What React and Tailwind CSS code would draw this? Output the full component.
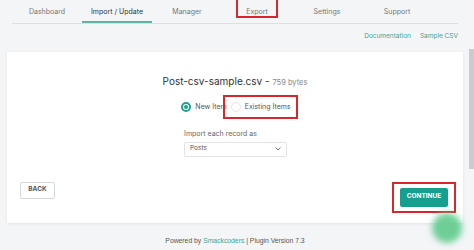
import React from "react";

const tabs = ["Dashboard", "Import / Update", "Manager", "Export", "Settings", "Support"];

export default function App() {
  return (
    <div className="relative w-[474px] h-[250px] overflow-hidden bg-[#f3f5f7] text-[#555]" style={{ fontFamily: "Inter, 'Noto Sans', sans-serif" }}>
      {/* tabs */}
      <div className="mx-[12px] w-[446px] h-[24px] flex border-b border-[#dcdfe2]">
        {tabs.map((t, i) => (
          <div
            key={t}
            className={`relative w-[70px] h-full flex items-start justify-center pt-[7px] text-[7px] ${
              i === 1 ? "text-[#333] border-b-2 border-[#5bb5a2] -mb-px" : "text-[#777]"
            }`}
          >
            {t}
            {t === "Export" && (
              <div className="absolute left-[14px] -top-[2px] w-[42px] h-[20px] border-2 border-[#d8262c]" />
            )}
          </div>
        ))}
      </div>

      <div className="flex justify-end gap-[9px] pr-[16px] pt-[8px] text-[6.5px] text-[#3ea592]">
        <span>Documentation</span>
        <span>Sample CSV</span>
      </div>

      <div className="flex items-start">
        {/* card */}
        <div className="ml-[7px] mt-[10px] w-[456px] h-[171px] bg-white shadow-[0_1px_3px_rgba(0,0,0,0.08)] flex flex-col">
          <div className="mt-[22px] text-center text-[10px] text-[#333]">
            Post-csv-sample.csv - <span className="text-[7.5px] text-[#888]">759 bytes</span>
          </div>

          <div className="mt-[13px] flex justify-center items-center text-[7px] text-[#555] pl-[2px]">
            <div className="flex items-center">
              <span className="w-[10px] h-[10px] rounded-full border-2 border-[#1e9f91] flex items-center justify-center">
                <span className="w-[4px] h-[4px] rounded-full bg-[#1e9f91]" />
              </span>
              <span className="ml-[4px]">New Item</span>
            </div>
            <div className="relative flex items-center ml-[4px]">
              <span className="w-[10px] h-[10px] rounded-full border border-[#e2e4e6]" />
              <span className="ml-[4px]">Existing Items</span>
              <div className="absolute -left-[8px] -right-[7px] -top-[7px] -bottom-[7px] border-2 border-[#d8262c]" />
            </div>
          </div>

          <div className="mt-[17px] ml-[177px] w-[103px]">
            <div className="text-[7px] text-[#666]">Import each record as</div>
            <div className="mt-[2px] h-[15px] border border-[#e2e4e6] rounded-[2px] flex items-center justify-between px-[5px] text-[6.5px] text-[#555]">
              <span>Posts</span>
              <svg width="6" height="4" viewBox="0 0 6 4" fill="none" stroke="#777" strokeWidth="1">
                <path d="M0.5 0.5 L3 3 L5.5 0.5" />
              </svg>
            </div>
          </div>

          <div className="mt-[25px] flex items-start justify-between pl-[13px] pr-[7px]">
            <button className="w-[35px] h-[17px] border border-[#d5d8db] rounded-[2px] text-[6.5px] font-bold text-[#555] flex items-center justify-center">
              BACK
            </button>
            <div className="px-[6px] py-[4px] border-2 border-[#d8262c]">
              <button className="w-[48px] h-[19px] bg-[#169f8f] rounded-[2px] text-white text-[6.5px] font-bold flex items-center justify-center">
                CONTINUE
              </button>
            </div>
          </div>
        </div>
        <div className="ml-[6px] mt-[7px] w-[5px] h-[120px] bg-[#c9ccd0]" />
      </div>

      <div className="mt-[13px] text-center text-[6.8px] text-[#555] pr-[4px]" style={{ fontFamily: "'Liberation Sans', Arial, sans-serif" }}>
        Powered by <span className="text-[#3ea592]">Smackcoders</span> | Plugin Version 7.3
      </div>

      <div className="absolute left-[432px] top-[213px] w-[30px] h-[30px] rounded-full bg-[#5fcb8c] blur-[3px] opacity-90" />
    </div>
  );
}
